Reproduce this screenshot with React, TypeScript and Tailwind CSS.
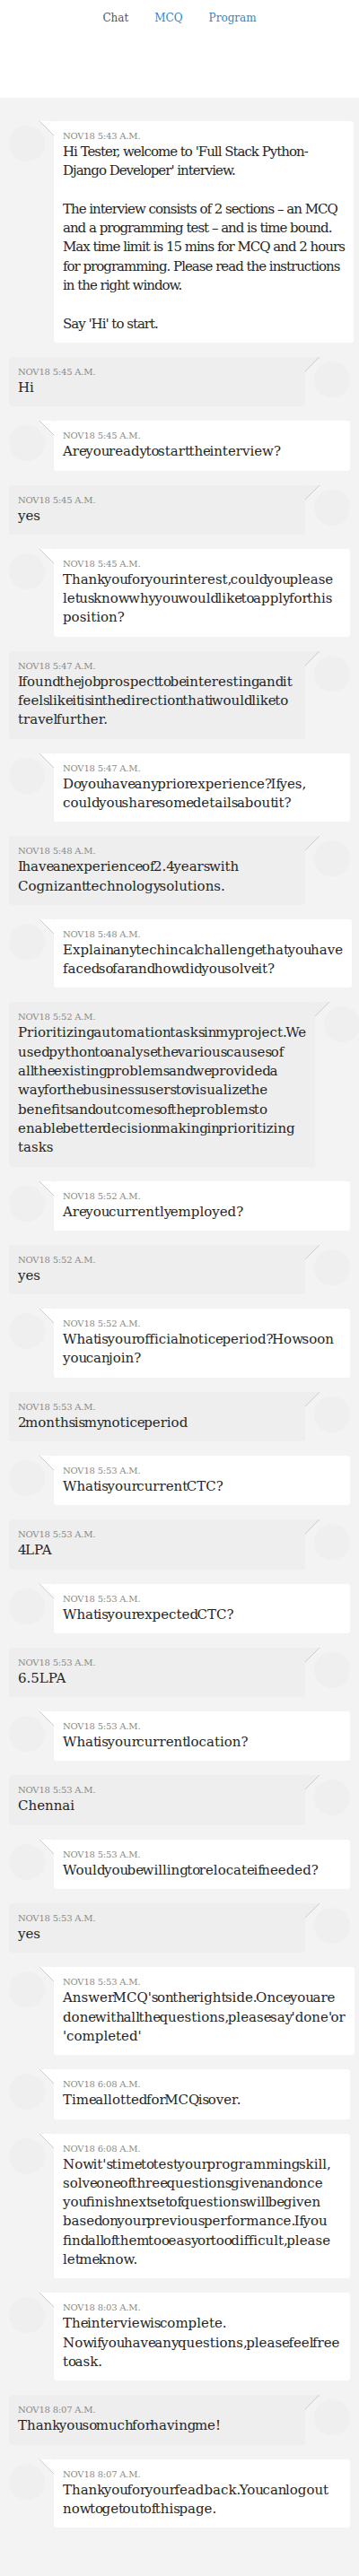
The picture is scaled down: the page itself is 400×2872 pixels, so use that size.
import React from "react";

type Msg = { from: "bot" | "user"; time: string; lines: string[] };

// lines are kept as they wrap in the chat window
const messages: Msg[] = [
  {
    from: "bot",
    time: "5:43",
    lines: [
      "Hi Tester, welcome to 'Full Stack Python-",
      "Django Developer' interview.",
      "",
      "The interview consists of 2 sections – an MCQ",
      "and a programming test – and is time bound.",
      "Max time limit is 15 mins for MCQ and 2 hours",
      "for programming. Please read the instructions",
      "in the right window.",
      "",
      "Say 'Hi' to start.",
    ],
  },
  { from: "user", time: "5:45", lines: ["Hi"] },
  { from: "bot", time: "5:45", lines: ["Are you ready to start the interview?"] },
  { from: "user", time: "5:45", lines: ["yes"] },
  {
    from: "bot",
    time: "5:45",
    lines: ["Thank you for your interest, could you please", "let us know why you would like to apply for this", "position?"],
  },
  {
    from: "user",
    time: "5:47",
    lines: ["I found the job prospect to be interesting and it", "feels like it is in the direction that i would like to", "travel further."],
  },
  { from: "bot", time: "5:47", lines: ["Do you have any prior experience? If yes,", "could you share some details about it?"] },
  { from: "user", time: "5:48", lines: ["I have an experience of 2.4 years with", "Cognizant technology solutions."] },
  { from: "bot", time: "5:48", lines: ["Explain any techincal challenge that you have", "faced so far and how did you solve it?"] },
  {
    from: "user",
    time: "5:52",
    lines: [
      "Prioritizing automation tasks in my project. We",
      "used python to analyse the various causes of",
      "all the existing problems and we provided a",
      "way for the business users to visualize the",
      "benefits and outcomes of the problems to",
      "enable better decision making in prioritizing",
      "tasks",
    ],
  },
  { from: "bot", time: "5:52", lines: ["Are you currently employed?"] },
  { from: "user", time: "5:52", lines: ["yes"] },
  { from: "bot", time: "5:52", lines: ["What is your official notice period? How soon", "you can join?"] },
  { from: "user", time: "5:53", lines: ["2 months is my notice period"] },
  { from: "bot", time: "5:53", lines: ["What is your current CTC?"] },
  { from: "user", time: "5:53", lines: ["4 LPA"] },
  { from: "bot", time: "5:53", lines: ["What is your expected CTC?"] },
  { from: "user", time: "5:53", lines: ["6.5LPA"] },
  { from: "bot", time: "5:53", lines: ["What is your current location?"] },
  { from: "user", time: "5:53", lines: ["Chennai"] },
  { from: "bot", time: "5:53", lines: ["Would you be willing to relocate if needed?"] },
  { from: "user", time: "5:53", lines: ["yes"] },
  {
    from: "bot",
    time: "5:53",
    lines: ["Answer MCQ's on the right side. Once you are", "done with all the questions, please say 'done' or", "'completed'"],
  },
  { from: "bot", time: "6:08", lines: ["Time allotted for MCQ is over."] },
  {
    from: "bot",
    time: "6:08",
    lines: [
      "Now it's time to test your programming skill,",
      "solve one of three questions given and once",
      "you finish next set of questions will be given",
      "based on your previous performance. If you",
      "find all of them too easy or too difficult, please",
      "let me know.",
    ],
  },
  {
    from: "bot",
    time: "8:03",
    lines: ["The interview is complete.", "Now if you have any questions, please feel free", "to ask."],
  },
  { from: "user", time: "8:07", lines: ["Thank you so much for having me!"] },
  { from: "bot", time: "8:07", lines: ["Thank you for your feadback. You can logout", "now to get out of this page."] },
];

function Avatar() {
  return <div className="mt-[5px] h-10 w-10 shrink-0 rounded-full bg-[#efefef]" />;
}

function Bubble({ msg, welcome }: { msg: Msg; welcome: boolean }) {
  const bot = msg.from === "bot";
  return (
    <div
      className={
        bot
          ? "relative ml-[10px] flex-1 rounded-[3px] bg-white p-[10px]"
          : "relative mr-[10px] flex-1 rounded-[3px] bg-[#eeeeee] p-[10px]"
      }
    >
      {bot ? (
        <svg className="absolute top-0 left-[-16px]" width="16" height="16" viewBox="0 0 16 16">
          <polygon points="0,0 16,0 16,16" fill="#ffffff" />
          <line x1="0" y1="0" x2="16" y2="16" stroke="#cccccc" strokeWidth="1" />
        </svg>
      ) : (
        <svg className="absolute top-0 right-[-16px]" width="16" height="16" viewBox="0 0 16 16">
          <polygon points="0,0 16,0 0,16" fill="#eeeeee" />
          <line x1="0" y1="16" x2="16" y2="0" stroke="#cccccc" strokeWidth="1" />
        </svg>
      )}
      <div className="h-[14px] text-[10px] leading-[14px] tracking-[-0.2px] text-[#8a8a8a]">
        NOV18 {msg.time} A.M.
      </div>
      <div
        className={
          welcome
            ? "whitespace-pre text-[15px] leading-[21.3px] tracking-[-1px] text-[#262626]"
            : "whitespace-pre text-[15px] leading-[21.3px] [word-spacing:-6.3px] text-[#262626]"
        }
      >
        {msg.lines.map((l, i) => (
          <div key={i} className="h-[21.3px]">
            {l}
          </div>
        ))}
      </div>
    </div>
  );
}

function Row({ msg, welcome }: { msg: Msg; welcome: boolean }) {
  if (msg.from === "bot") {
    return (
      <div className="flex items-start">
        <Avatar />
        <Bubble msg={msg} welcome={welcome} />
      </div>
    );
  }
  return (
    <div className="flex items-start">
      <Bubble msg={msg} welcome={welcome} />
      <Avatar />
    </div>
  );
}

export default function App() {
  return (
    <div
      className="min-h-[2872px] bg-[#f3f3f3]"
      style={{ fontFamily: '"DejaVu Serif", "Liberation Serif", serif' }}
    >
      <nav className="flex h-[109px] justify-center gap-[29px] bg-white pt-[11px] text-[12px] leading-[18px]">
        <span className="text-[#555555]">Chat</span>
        <span className="text-[#3b82c4]">MCQ</span>
        <span className="text-[#3b82c4]">Program</span>
      </nav>
      <main className="flex flex-col gap-4 px-[10px] pt-[26px] pb-10">
        {messages.map((m, i) => (
          <Row key={i} msg={m} welcome={i === 0} />
        ))}
      </main>
    </div>
  );
}
